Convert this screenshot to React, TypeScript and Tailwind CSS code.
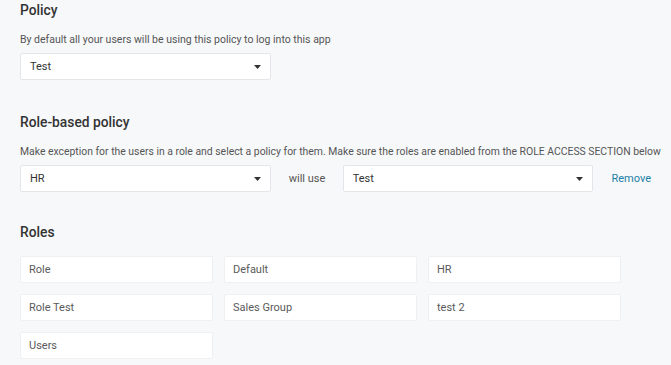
import { ReactNode } from "react";

function Caret() {
  return (
    <svg width="7" height="4" viewBox="0 0 7 4" className="shrink-0">
      <path d="M0 0h7L3.5 4z" fill="#333" />
    </svg>
  );
}

function Select({ value, className = "" }: { value: string; className?: string }) {
  return (
    <div
      className={`flex h-[27px] w-[251px] items-center justify-between rounded-[2px] border border-[#e4e6ea] bg-white pl-[9px] pr-[9px] text-[11px] text-[#333] ${className}`}
    >
      <span className="pt-[1px]">{value}</span>
      <Caret />
    </div>
  );
}

function Heading({ children, className = "" }: { children: ReactNode; className?: string }) {
  return (
    <h2 className={`text-[13.8px] leading-[20px] font-medium text-[#333] ${className}`}>{children}</h2>
  );
}

const roles = ["Role", "Default", "HR", "Role Test", "Sales Group", "test 2", "Users"];

export default function App() {
  return (
    <div
      className="h-[365px] w-[671px] overflow-hidden bg-[#f7f8fa] px-5"
      style={{ fontFamily: "Roboto, 'Liberation Sans', sans-serif" }}
    >
      <Heading>Policy</Heading>
      <p className="mt-3 text-[10.5px] leading-[16px] text-[#555]">
        By default all your users will be using this policy to log into this app
      </p>
      <Select value="Test" className="mt-[5px]" />

      <Heading className="mt-8">Role-based policy</Heading>
      <p className="mt-3 whitespace-nowrap text-[10.4px] leading-[16px] text-[#555]">
        Make exception for the users in a role and select a policy for them. Make sure the roles are
        enabled from the ROLE ACCESS SECTION below
      </p>
      <div className="mt-[5px] flex items-center">
        <Select value="HR" />
        <span className="ml-[18px] w-[54px] pt-[1px] text-[11px] text-[#555]">will use</span>
        <Select value="Test" />
        <button className="ml-[18px] pt-[1px] text-[11px] text-[#1d7fa6]">Remove</button>
      </div>

      <Heading className="mt-[30px]">Roles</Heading>
      <div className="mt-[14px] grid grid-cols-[193px_193px_193px] gap-x-[11px] gap-y-[11px]">
        {roles.map((r) => (
          <div
            key={r}
            className="flex h-[27px] items-center rounded-[2px] border border-[#eef0f2] bg-white pl-[8px] pt-[2px] text-[11px] text-[#5a5a5a]"
          >
            {r}
          </div>
        ))}
      </div>
    </div>
  );
}
